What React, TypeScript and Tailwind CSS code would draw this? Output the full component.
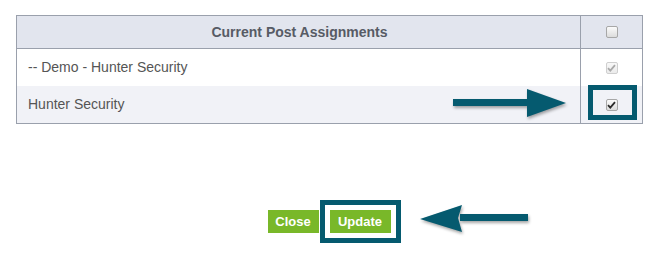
import React from "react";

function Box({ checked, disabled }: { checked?: boolean; disabled?: boolean }) {
  return (
    <span
      className={
        "inline-flex h-[12px] w-[12px] items-center justify-center rounded-[2px] border bg-gradient-to-b " +
        (disabled
          ? "border-[#cfcfcf] from-[#f8f8f8] to-[#ebebeb]"
          : "border-[#a7a7a7] from-[#fbfbfb] to-[#dcdcdc]")
      }
    >
      {checked && (
        <svg width="9" height="8" viewBox="0 0 9 8">
          <path
            d="M1 4.2 L3.3 6.6 L8 1.2"
            fill="none"
            stroke={disabled ? "#a9a9a9" : "#2b2b2b"}
            strokeWidth="1.8"
          />
        </svg>
      )}
    </span>
  );
}

export default function App() {
  return (
    <div
      className="relative h-[262px] w-[655px] overflow-hidden bg-white"
      style={{ fontFamily: '"Liberation Sans", Arial, sans-serif' }}
    >
      <div className="pl-[16px] pt-[15px]">
        <table className="w-[627px] border-collapse border border-[#9aa0ac] text-[14px] text-[#555]">
          <thead>
            <tr className="h-[33px] bg-[#e2e5ee]">
              <th className="w-[564px] border-r border-b border-[#9aa0ac] pl-[2px] text-center text-[14px] font-bold text-[#575b65]">
                Current Post Assignments
              </th>
              <th className="border-b border-[#9aa0ac] pt-[2px] align-middle">
                <Box />
              </th>
            </tr>
          </thead>
          <tbody>
            <tr className="h-[37px] bg-white">
              <td className="border-r border-[#9aa0ac] pl-[11px]">-- Demo - Hunter Security</td>
              <td className="text-center align-middle">
                <Box checked disabled />
              </td>
            </tr>
            <tr className="h-[38px] bg-[#f1f2f7]">
              <td className="border-r border-[#9aa0ac] pl-[11px]">Hunter Security</td>
              <td className="relative text-center align-middle">
                <Box checked />
                <div className="absolute left-[7px] top-[-1px] h-[35px] w-[49px] border-[5px] border-[#055a6f]" />
              </td>
            </tr>
          </tbody>
        </table>
      </div>

      <div className="mt-[86px] flex justify-center gap-[11px] pl-[3px]">
        <button className="h-[23px] w-[51px] bg-[#79b829] text-[13px] font-bold text-white">Close</button>
        <button className="h-[23px] w-[61px] bg-[#79b829] text-[13px] font-bold text-white outline-[5px] outline-offset-[5px] outline-[#055a6f] outline-solid">
          Update
        </button>
      </div>

      {/* annotation arrows */}
      <svg
        className="absolute left-0 top-0"
        width="655"
        height="262"
        style={{ filter: "drop-shadow(1px 2px 1.5px rgba(0,0,0,0.35))" }}
      >
        <rect x="453" y="99" width="76" height="7" fill="#055a6f" />
        <polygon points="527,89 566,103 527,117" fill="#055a6f" />
        <rect x="460" y="214" width="68" height="7" fill="#055a6f" />
        <polygon points="420,219 462,205 458,218 462,232" fill="#055a6f" />
      </svg>
    </div>
  );
}
